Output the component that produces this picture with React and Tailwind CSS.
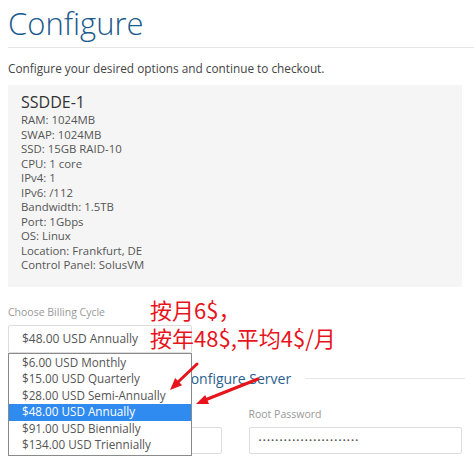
import React from "react";

const specs = [
  "RAM: 1024MB",
  "SWAP: 1024MB",
  "SSD: 15GB RAID-10",
  "CPU: 1 core",
  "IPv4: 1",
  "IPv6: /112",
  "Bandwidth: 1.5TB",
  "Port: 1Gbps",
  "OS: Linux",
  "Location: Frankfurt, DE",
  "Control Panel: SolusVM",
];

const cycles = [
  "$6.00 USD Monthly",
  "$15.00 USD Quarterly",
  "$28.00 USD Semi-Annually",
  "$48.00 USD Annually",
  "$91.00 USD Biennially",
  "$134.00 USD Triennially",
];

export default function App() {
  return (
    <div className="relative w-[474px] h-[469px] overflow-hidden bg-white font-['Open_Sans',sans-serif] text-[#333]">
      {/* Page title */}
      <div className="pl-2">
        <h1 className="border-b border-[#e6e6e6] pt-[7px] pb-[8px] text-[31px] leading-[32px] font-light text-[#1a5a8c]">
          Configure
        </h1>
      </div>

      <div className="pl-2 pr-3">
        <p className="mt-[10px] text-[11.8px] leading-[20px] text-[#444]">
          Configure your desired options and continue to checkout.
        </p>

        {/* Product summary */}
        <div className="mt-[7px] bg-[#f5f5f5] pl-[13px] pt-[6px] pb-[14px]">
          <div className="text-[16px] leading-[22px] text-[#333]">SSDDE-1</div>
          {specs.map((s) => (
            <div key={s} className="text-[11.4px] leading-[14.5px] text-[#555]">
              {s}
            </div>
          ))}
        </div>

        {/* Billing cycle */}
        <div className="mt-[17px] text-[10.5px] leading-[16px] text-[#999]">Choose Billing Cycle</div>
        <div className="relative mt-[5px] w-[184px]">
          <div className="flex h-[28px] items-center rounded-[2px] border border-[#ddd] pl-[13px] text-[12px] leading-[18px] text-[#555]">
            $48.00 USD Annually
          </div>
          <div className="absolute left-0 top-full z-10 w-[184px] border border-[#8a8a8a] bg-white py-[1px]">
            {cycles.map((c) => (
              <div
                key={c}
                className={
                  c === "$48.00 USD Annually"
                    ? "flex h-[16.5px] items-center pl-[13px] text-[11.7px] bg-[#2f8bef] text-white"
                    : "flex h-[16.5px] items-center pl-[13px] text-[11.7px] text-[#555]"
                }
              >
                {c}
              </div>
            ))}
          </div>
        </div>

        {/* Configure server */}
        <div className="mt-[16px] flex items-center">
          <div className="h-px flex-1 bg-[#e6e6e6]" />
          <div className="px-[14px] text-[14px] leading-[20px] text-[#2a6190]">Configure Server</div>
          <div className="-mr-[3px] h-px flex-1 bg-[#e6e6e6]" />
        </div>

        <div className="mt-[17px] grid grid-cols-2 gap-[27px]">
          <div>
            <div className="h-[16px]" />
            <div className="mt-[5px] h-[27px] rounded-[2px] border border-[#ddd]" />
          </div>
          <div>
            <div className="text-[10.5px] leading-[16px] text-[#999]">Root Password</div>
            <div className="mt-[5px] flex h-[27px] items-center rounded-[2px] border border-[#ddd] pl-[9px] text-[8px] tracking-[1.2px] text-[#555]">
              ••••••••••••••••••••••••
            </div>
          </div>
        </div>
      </div>

      {/* Red annotation */}
      <div className="absolute left-[150px] top-[295px] z-20 font-['Noto_Sans_CJK_SC',sans-serif] text-[22px] leading-[28px] text-[#e8141c]">
        <div>按月6$，</div>
        <div>按年48$,平均4$/月</div>
      </div>
      <svg className="absolute left-0 top-0 z-20" width="474" height="469" viewBox="0 0 474 469">
        <line x1="197" y1="364" x2="177" y2="383" stroke="#e8141c" strokeWidth="3" strokeLinecap="round" />
        <polygon points="170,390 182.1,385.3 175.2,378.1" fill="#e8141c" />
        <line x1="258" y1="379" x2="205" y2="400" stroke="#e8141c" strokeWidth="3" strokeLinecap="round" />
        <polygon points="196,404 209,404.1 205.2,394.9" fill="#e8141c" />
      </svg>
    </div>
  );
}
